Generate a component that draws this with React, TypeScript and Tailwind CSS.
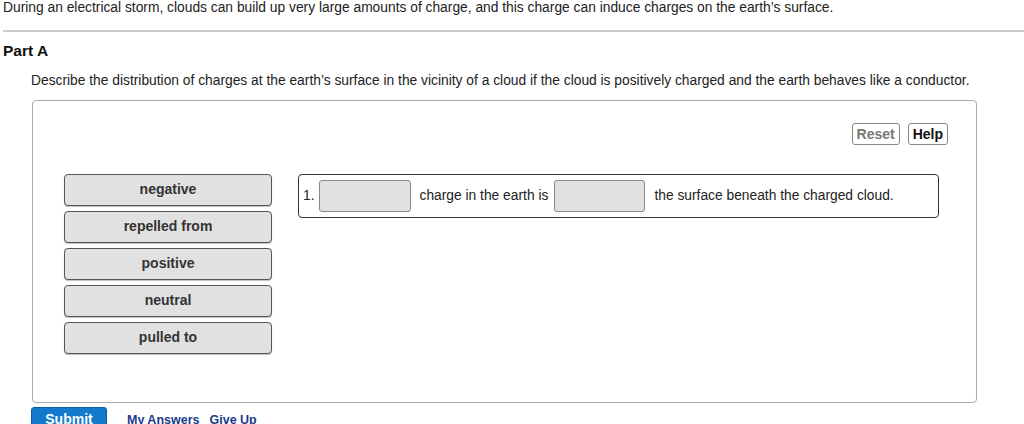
import React from "react";

const items = ["negative", "repelled from", "positive", "neutral", "pulled to"];

export default function App() {
  return (
    <div className="w-[1024px] h-[424px] overflow-hidden bg-white font-['Liberation_Sans',Arial,sans-serif] text-[13.8px] text-[#222]">
      <p className="pl-[3px] pt-[0px] leading-[16px]">
        During an electrical storm, clouds can build up very large amounts of charge, and this charge can induce charges on the earth’s surface.
      </p>
      <div className="ml-[3px] mt-[14px] h-[2px] bg-[#cccccc]" />
      <div className="pl-[3px] mt-[10px] text-[15.5px] font-bold leading-[17px] text-[#111]">Part A</div>
      <p className="ml-[31px] mt-[14px] leading-[16px]">
        Describe the distribution of charges at the earth’s surface in the vicinity of a cloud if the cloud is positively charged and the earth behaves like a conductor.
      </p>
      <div className="ml-[32px] mt-[11px] w-[945px] h-[303px] rounded-[4px] border border-[#aaaaaa] flex flex-col">
        <div className="flex justify-end gap-[8px] pr-[28px] pt-[22px]">
          <button className="h-[22px] px-[4px] rounded-[3px] border border-[#888] bg-white text-[14px] font-bold text-[#777] leading-[20px]">
            Reset
          </button>
          <button className="h-[22px] px-[4px] rounded-[3px] border border-[#888] bg-white text-[14px] font-bold text-[#111] leading-[20px]">
            Help
          </button>
        </div>
        <div className="flex items-start gap-[26px] pl-[31px] mt-[29px]">
          <div className="flex flex-col gap-[5px]">
            {items.map((t) => (
              <div
                key={t}
                className="w-[208px] h-[32px] rounded-[4px] border border-[#555] bg-[#e1e1e1] shadow-[0_1px_1px_rgba(0,0,0,0.25)] flex items-center justify-center font-bold text-[#333] text-[14px] pb-[1px]"
              >
                {t}
              </div>
            ))}
          </div>
          <div className="w-[641px] h-[44px] rounded-[4px] border-[1.5px] border-[#333] flex items-center pl-[4px] text-[13.8px] text-[#222]">
            <span>1.</span>
            <div className="ml-[4px] w-[92px] h-[32px] rounded-[3px] border border-[#888] bg-[#e1e1e1]" />
            <span className="ml-[9px]">charge in the earth is</span>
            <div className="ml-[6px] w-[91px] h-[32px] rounded-[3px] border border-[#888] bg-[#e1e1e1]" />
            <span className="ml-[9px]">the surface beneath the charged cloud.</span>
          </div>
        </div>
      </div>
      <div className="flex items-start ml-[31px] mt-[4px]">
        <button className="w-[76px] h-[28px] rounded-[3px] border border-[#0a5fa8] bg-[#1479cc] text-white font-bold text-[14px] leading-[20px] pb-[4px]">
          Submit
        </button>
        <span className="ml-[20px] mt-[4px] font-bold text-[#1b3a8c] text-[12.5px]">My Answers</span>
        <span className="ml-[10px] mt-[4px] font-bold text-[#1b3a8c] text-[12.5px]">Give Up</span>
      </div>
    </div>
  );
}
